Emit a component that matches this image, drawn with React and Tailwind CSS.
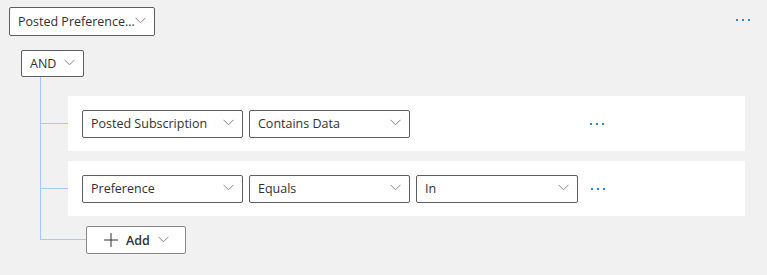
import React from 'react';

const Chevron = ({ className = '' }) => (
  <svg width="11" height="7" viewBox="0 0 11 7" className={className} fill="none">
    <path d="M0.5 0.8 L5.5 5.8 L10.5 0.8" stroke="#8a8886" strokeWidth="1" />
  </svg>
);

const Dots = () => (
  <div className="flex items-center gap-[4px] px-[2px] py-[4px]">
    <span className="block w-[2px] h-[2px] bg-[#2b88d8]" />
    <span className="block w-[2px] h-[2px] bg-[#2b88d8]" />
    <span className="block w-[2px] h-[2px] bg-[#2b88d8]" />
  </div>
);

const Dropdown = ({ label, width, height = 'h-[28px]' }) => (
  <div
    className={`flex items-center justify-between ${height} border border-[#605e5c] rounded-[2px] bg-white pl-[8px] pr-[8px]`}
    style={{ width }}
  >
    <span className="mt-[2px] text-[12.5px] text-[#323130] whitespace-nowrap">{label}</span>
    <Chevron className="-mt-[2px] shrink-0" />
  </div>
);

const Line = 'border-l border-[#a6c8ff]';

const ConditionRow = ({ fields }) => (
  <div className={`flex items-stretch ${Line}`}>
    <div className="w-[27px] flex items-center">
      <div className="w-full h-px bg-[#a6c8ff]" />
    </div>
    <div className="w-[677px] h-[55px] bg-white flex items-center pl-[14px]">
      <div className="flex items-center gap-[6px]">
        {fields.map((f, i) => (
          <Dropdown key={i} label={f.label} width={f.w} />
        ))}
      </div>
      {fields.length < 3 && <div className="w-[167px]" />}
      <div className="ml-[11px]">
        <Dots />
      </div>
    </div>
  </div>
);

export default function App() {
  return (
    <div
      className="w-[767px] h-[275px] bg-[#f1f1f1] overflow-hidden"
      style={{ fontFamily: '"Open Sans", "Noto Sans", sans-serif' }}
    >
      <div className="flex items-start justify-between pl-[9px] pt-[7px] pr-[15px]">
        <Dropdown label="Posted Preference..." width="146px" height="h-[29px]" />
        <div className="mt-[8px]">
          <Dots />
        </div>
      </div>

      <div className="pl-[21px] pt-[14px]">
        <div className="flex items-center justify-between w-[63px] h-[27px] border border-[#605e5c] rounded-[2px] bg-white pl-[8px] pr-[8px]">
          <span className="mt-[2px] text-[12.5px] text-[#323130]">AND</span>
          <Chevron className="-mt-[2px]" />
        </div>
      </div>

      <div className="pl-[40px] flex flex-col">
        <div className={`h-[19px] ${Line}`} />
        <ConditionRow
          fields={[
            { label: 'Posted Subscription', w: '161px' },
            { label: 'Contains Data', w: '161px' },
          ]}
        />
        <div className={`h-[10px] ${Line}`} />
        <ConditionRow
          fields={[
            { label: 'Preference', w: '161px' },
            { label: 'Equals', w: '161px' },
            { label: 'In', w: '162px' },
          ]}
        />
        <div className={`h-[10px] ${Line}`} />
        <div className="flex items-start">
          <div className="w-[46px] h-[14px] border-l border-b border-[#a6c8ff]" />
          <button className="flex items-center w-[100px] h-[28px] border border-[#8a8886] rounded-[2px] bg-white pl-[17px]">
            <svg width="14" height="14" viewBox="0 0 14 14" fill="none">
              <path d="M7 0 V14 M0 7 H14" stroke="#323130" strokeWidth="1" />
            </svg>
            <span className="ml-[8px] mt-[2px] text-[12.5px] font-semibold text-[#323130]">Add</span>
            <Chevron className="ml-[8px] -mt-[2px]" />
          </button>
        </div>
      </div>
    </div>
  );
}
